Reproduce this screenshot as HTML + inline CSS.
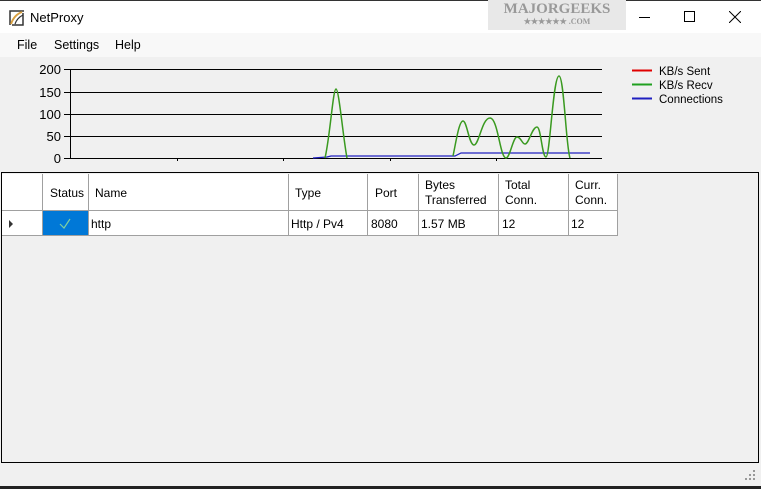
<!DOCTYPE html>
<html><head><style>
body{margin:0;width:761px;height:489px;overflow:hidden;background:#f0f0f0;font-family:"Liberation Sans",sans-serif;font-size:12px;color:#000;position:relative}
.abs{position:absolute}
</style></head><body>
<div class="abs" style="left:0;top:0;width:761px;height:33px;background:#fff;border-top:1px solid #333"></div>
<svg class="abs" style="left:8px;top:9px" width="17" height="17" viewBox="0 0 17 17"><path d="M2 16V2h14" fill="none" stroke="#333" stroke-width="1.5"/><path d="M3 15Q6 6 14 3" fill="none" stroke="#d9a040" stroke-width="2"/><path d="M7 15Q9 9 15 6" fill="none" stroke="#333" stroke-width="1.2"/><path d="M15 4v12H4" fill="none" stroke="#333" stroke-width="1.5"/></svg>
<div class="abs" style="left:30px;top:10px;font-size:13px">NetProxy</div>
<div class="abs" style="left:488px;top:0;width:138px;height:30px;background:#e8e8e8;color:#999;font:bold 15px 'Liberation Serif',serif;text-align:center;line-height:18px">MAJORGEEKS<div style="font-size:8px;line-height:8px">★★★★★★ .COM</div></div>
<div class="abs" style="left:639px;top:17px;width:11px;height:1px;background:#000"></div>
<div class="abs" style="left:684px;top:11px;width:9px;height:9px;border:1px solid #000"></div>
<svg class="abs" style="left:729px;top:11px" width="12" height="12"><path d="M0 0L12 12M12 0L0 12" stroke="#000" stroke-width="1"/></svg>
<div class="abs" style="left:0;top:33px;width:761px;height:24px;background:#f8f8f8"></div>
<div class="abs" style="left:17px;top:38px;font-size:12.5px">File</div>
<div class="abs" style="left:54px;top:38px;font-size:12.5px">Settings</div>
<div class="abs" style="left:115px;top:38px;font-size:12.5px">Help</div>
<svg class="abs" style="left:0;top:57px" width="761" height="115" font-family="Liberation Sans" font-size="13">
<g stroke="#000" stroke-width="1">
<path d="M70 12.5H602M70 35.5H602M70 57.5H602M70 79.5H602M64 101.5H602"/>
<path d="M70.5 12V102M64 12.5H71M64 35.5H71M64 57.5H71M64 79.5H71M177.5 101V104M283.5 101V104M390.5 101V104M496.5 101V104"/>
</g>
<g text-anchor="end"><text x="61" y="17">200</text><text x="61" y="40">150</text><text x="61" y="62">100</text><text x="61" y="84">50</text><text x="61" y="106">0</text></g>
<path d="M313 101L327 100L331 99H455L461 96H590" fill="none" stroke="#2020c0" stroke-width="1.2"/>
<path d="M325 101C330 80 333 32 336 32C339 32 343 80 347 101" fill="none" stroke="#3a9a20" stroke-width="1.5"/>
<path d="M453 99C456 85 459 64 463 64C467 64 469 88 474 88C479 88 482 61 490 61C498 61 500 101 506 101C510 101 513 80 517 80C521 80 522 87 525 87C529 87 532 70 537 70C541 70 542 100 546 100C550 100 553 19 559 19C564 19 566 90 570 101" fill="none" stroke="#3a9a20" stroke-width="1.5"/>
<path d="M632 13.5H652" stroke="#e00000" stroke-width="2"/><path d="M632 27.5H652" stroke="#20a020" stroke-width="2"/><path d="M632 41.5H652" stroke="#2020c0" stroke-width="2"/>
<g font-size="11.5"><text x="659" y="18">KB/s Sent</text><text x="659" y="32">KB/s Recv</text><text x="659" y="46">Connections</text></g>
</svg>
<div class="abs" style="left:1px;top:172px;width:756px;height:289px;border:1.5px solid #000;background:#f0f0f0"></div>
<div class="abs" style="left:2px;top:174px;width:616px;height:62px;background:#fff"></div>
<svg class="abs" style="left:0;top:172px" width="620" height="66">
<g stroke="#a0a0a0" stroke-width="1" fill="none">
<path d="M42.5 2V64M88.5 2V64M288.5 2V64M367.5 2V64M418.5 2V64M498.5 2V64M568.5 2V64M617.5 2V64M2 38.5H618M2 63.5H618"/>
</g>
<rect x="43" y="39" width="45" height="24" fill="#0078d7"/>
<path d="M60 52L64 56L70 47" fill="none" stroke="#7fd0a0" stroke-width="1.2"/>
<path d="M9 48V56L13 52Z" fill="#333"/>
</svg>
<div class="abs" style="left:50px;top:186px">Status</div>
<div class="abs" style="left:95px;top:186px">Name</div>
<div class="abs" style="left:295px;top:186px">Type</div>
<div class="abs" style="left:375px;top:186px">Port</div>
<div class="abs" style="left:425px;top:178px;line-height:15px">Bytes<br>Transferred</div>
<div class="abs" style="left:505px;top:178px;line-height:15px">Total<br>Conn.</div>
<div class="abs" style="left:575px;top:178px;line-height:15px">Curr.<br>Conn.</div>
<div class="abs" style="left:91px;top:217px">http</div>
<div class="abs" style="left:291px;top:217px">Http / Pv4</div>
<div class="abs" style="left:371px;top:217px">8080</div>
<div class="abs" style="left:421px;top:217px">1.57 MB</div>
<div class="abs" style="left:502px;top:217px">12</div>
<div class="abs" style="left:571px;top:217px">12</div>
<div class="abs" style="left:0;top:486px;width:761px;height:3px;background:#222"></div>
<svg class="abs" style="left:745px;top:470px" width="12" height="12" fill="#999"><rect x="8" y="0" width="2" height="2"/><rect x="4" y="4" width="2" height="2"/><rect x="8" y="4" width="2" height="2"/><rect x="0" y="8" width="2" height="2"/><rect x="4" y="8" width="2" height="2"/><rect x="8" y="8" width="2" height="2"/></svg>
</body></html>
